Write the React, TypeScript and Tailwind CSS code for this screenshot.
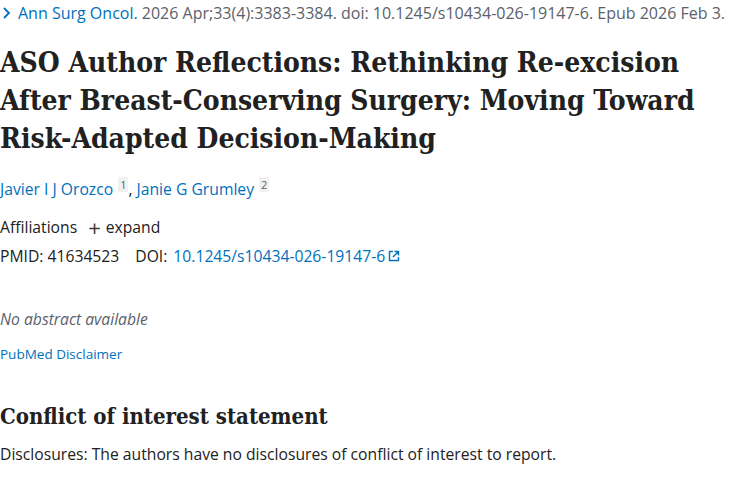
import React from "react";

const sans = { fontFamily: '"Open Sans", "Noto Sans", sans-serif' };
const serif = { fontFamily: '"DejaVu Serif", "Liberation Serif", serif', fontStretch: "condensed" as const };

export default function App() {
  return (
    <div className="w-[750px] h-[500px] bg-white overflow-hidden text-[#212121]" style={sans}>
      <div className="flex items-center text-[16px] leading-[26px] text-[#5b616b]">
        <svg width="14" height="14" viewBox="0 0 14 14" className="mr-[4px]">
          <path d="M4 2 L9 7 L4 12" fill="none" stroke="#0071bc" strokeWidth="1.8" />
        </svg>
        <span className="text-[#0071bc]">Ann Surg Oncol.</span>
        <span>&nbsp;2026 Apr;33(4):3383-3384. doi: 10.1245/s10434-026-19147-6. Epub 2026 Feb 3.</span>
      </div>
      <h1 className="mt-[18px] text-[28px] leading-[38px] font-bold text-[#212121]" style={serif}>
        ASO Author Reflections: Rethinking Re-excision After Breast-Conserving Surgery: Moving Toward Risk-Adapted Decision-Making
      </h1>
      <div className="mt-[20px] text-[15.7px] leading-[22px]">
        <span className="text-[#0071bc]">Javier I J Orozco</span>
        <sup className="ml-[5px] bg-[#f1f1f1] text-[11px] px-[2px] text-[#5b616b] top-[-6px]">1</sup>
        <span>, </span>
        <span className="text-[#0071bc]">Janie G Grumley</span>
        <sup className="ml-[5px] bg-[#f1f1f1] text-[11px] px-[2px] text-[#5b616b] top-[-6px]">2</sup>
      </div>
      <div className="mt-[16px] text-[15.7px] leading-[22px] flex items-center">
        <span>Affiliations</span>
        <span className="ml-[11px] text-[22px] leading-none text-[#3a3a3a]">+</span>
        <span className="ml-[5px]">expand</span>
      </div>
      <div className="mt-[7px] text-[15.7px] leading-[22px] flex items-center">
        <span>PMID: 41634523</span>
        <span className="ml-[16px]">DOI:</span>
        <span className="ml-[6px] text-[#0071bc]">10.1245/s10434-026-19147-6</span>
        <svg width="12" height="12" viewBox="0 0 12 12" className="ml-[3px]">
          <path d="M5 1.5 H1.5 V10.5 H10.5 V7" fill="none" stroke="#0071bc" strokeWidth="1.4" />
          <path d="M6.5 1.5 H10.5 V5.5 M10.5 1.5 L5 7" fill="none" stroke="#0071bc" strokeWidth="1.4" />
        </svg>
      </div>
      <div className="mt-[41px] text-[15.7px] leading-[22px] italic text-[#5b616b]">No abstract available</div>
      <div className="mt-[14px] text-[13.5px] leading-[20px] text-[#0071bc]">PubMed Disclaimer</div>
      <h2 className="mt-[38px] text-[22px] leading-[28px] font-bold" style={serif}>Conflict of interest statement</h2>
      <div className="mt-[13px] text-[15.7px] leading-[22px]">Disclosures: The authors have no disclosures of conflict of interest to report.</div>
    </div>
  );
}
